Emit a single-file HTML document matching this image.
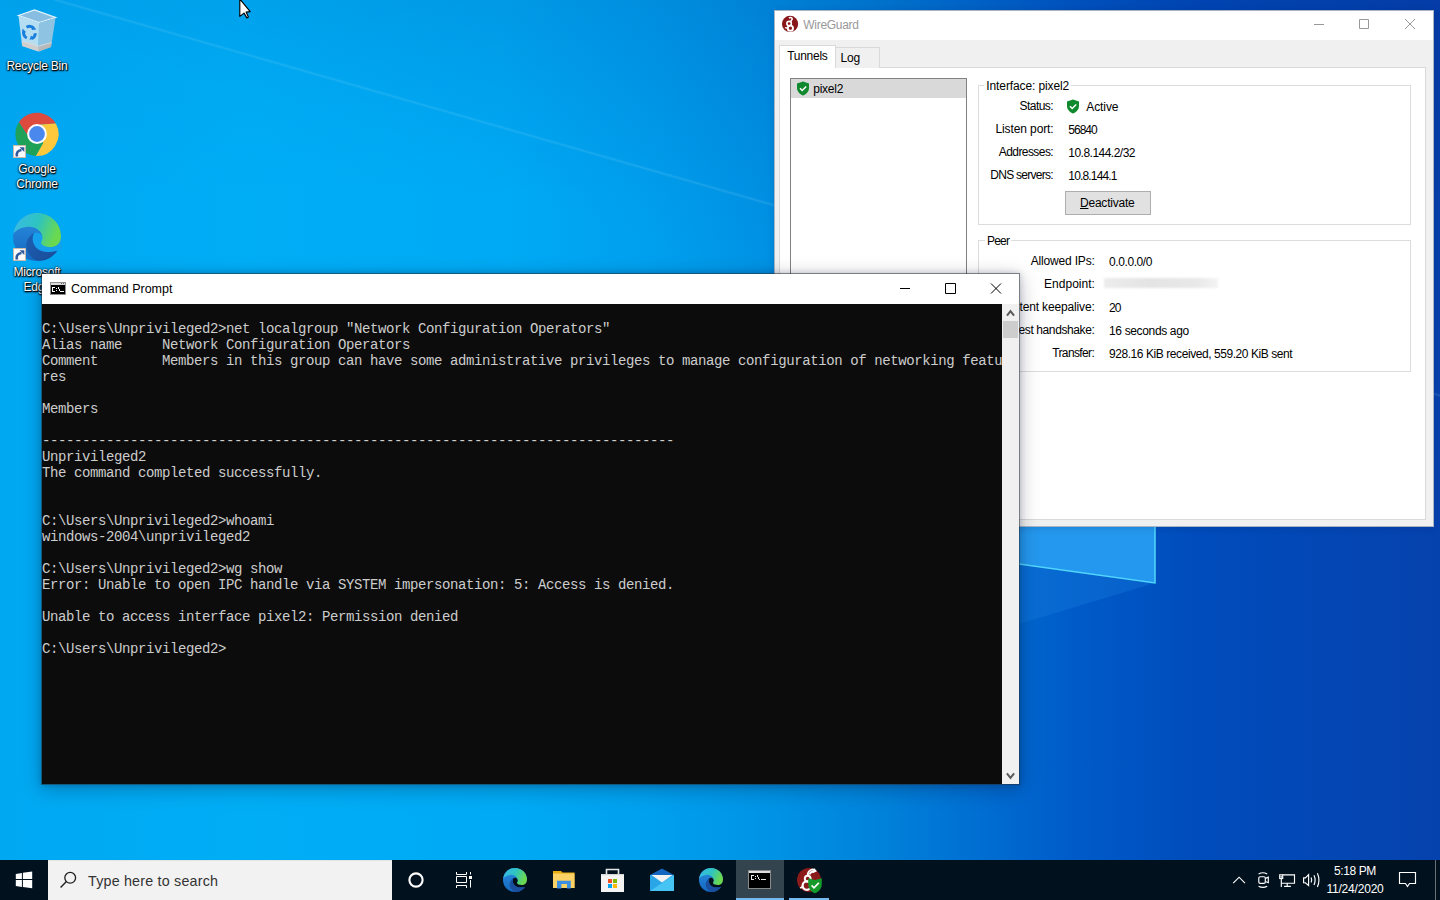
<!DOCTYPE html>
<html><head><meta charset="utf-8">
<style>
*{margin:0;padding:0;box-sizing:border-box}
html,body{width:1440px;height:900px;overflow:hidden}
body{position:relative;font-family:"Liberation Sans",sans-serif;background:#0a5fd0}
.a{position:absolute}
.txt{white-space:pre}
#con{left:42px;top:304px;width:960px;height:480px;background:#0c0c0c;color:#cccccc;font-family:"Liberation Mono",monospace;font-size:14px;letter-spacing:-0.4px;line-height:16px;white-space:pre;padding-top:17px}
.lbl{color:#fff;font-size:12px;letter-spacing:-0.2px;text-align:center;text-shadow:0 0 2px #000,0 1px 2px #000,1px 1px 1px #000}
</style></head><body>
<svg class="a" style="left:0;top:0" width="1440" height="900">
 <defs>
  <linearGradient id="wb" x1="0" y1="0" x2="1440" y2="0" gradientUnits="userSpaceOnUse">
   <stop offset="0" stop-color="#00a8f2"/><stop offset=".17" stop-color="#00aef6"/><stop offset=".35" stop-color="#00aaf4"/>
   <stop offset=".45" stop-color="#00a0ee"/><stop offset=".54" stop-color="#0092e4"/><stop offset=".61" stop-color="#0082da"/>
   <stop offset=".68" stop-color="#006ed2"/><stop offset=".75" stop-color="#005ac8"/><stop offset=".83" stop-color="#004cbc"/>
   <stop offset="1" stop-color="#0642ae"/>
  </linearGradient>
  <linearGradient id="wt" x1="330" y1="380" x2="560" y2="-250" gradientUnits="userSpaceOnUse">
   <stop offset="0" stop-color="#002a90" stop-opacity="0"/><stop offset=".35" stop-color="#002a90" stop-opacity="0"/><stop offset=".7" stop-color="#002a90" stop-opacity=".1"/><stop offset="1" stop-color="#002a90" stop-opacity=".2"/>
  </linearGradient>
  <linearGradient id="wv" x1="0" y1="0" x2="0" y2="900" gradientUnits="userSpaceOnUse">
   <stop offset="0" stop-color="#003090" stop-opacity=".06"/><stop offset=".22" stop-color="#003090" stop-opacity="0"/>
  </linearGradient>
 </defs>
 <rect width="1440" height="900" fill="url(#wb)"/>
 <rect width="1440" height="900" fill="url(#wv)"/>
 <rect width="1440" height="900" fill="url(#wt)"/>
 <path d="M54 -0.5L1440 395.5" stroke="#8fdcff" stroke-opacity=".07" stroke-width="3.5"/><path d="M54 -0.5L1440 395.5" stroke="#a8e6ff" stroke-opacity=".12" stroke-width="1"/>
 <path d="M1019 564L1155 583L1019 624Z" fill="#1a80e0" fill-opacity=".32"/>
 <path d="M1019 527H1155V583L1019 564Z" fill="#2498ee"/>
 <path d="M1155 527V583L1019 564" fill="none" stroke="#50d6fc" stroke-width="1.5"/>
</svg>

<!-- desktop icons -->
<svg class="a" style="left:0;top:0" width="80" height="300">
 <defs>
  <linearGradient id="egA" x1="0" y1="0" x2="1" y2="0.3"><stop offset="0" stop-color="#3ab8ec"/><stop offset=".55" stop-color="#2ec4c0"/><stop offset="1" stop-color="#6ad950"/></linearGradient>
  <linearGradient id="egB" x1="0" y1="0" x2="0" y2="1"><stop offset="0" stop-color="#2a8ee0"/><stop offset="1" stop-color="#1468c0"/></linearGradient>
  <linearGradient id="egC" x1="0" y1="0" x2="1" y2="1"><stop offset="0" stop-color="#1c5fb4"/><stop offset="1" stop-color="#1a4c98"/></linearGradient>
 </defs>
 <!-- recycle bin -->
 <path d="M18.5 15.5L34.5 10L55.5 17.5L39 22.5Z" fill="#86bde0" stroke="#e4f3fb" stroke-width="1.3"/>
 <path d="M18.5 16L39 23L38.6 51.5L22.2 46Z" fill="#b6def3"/>
 <path d="M39 23L55.5 18L51 47L38.6 51.5Z" fill="#8fc3e2"/>
 <path d="M21.6 41.5L38.8 47L38.6 51.5L22.2 46Z" fill="#cfcfcf"/>
 <path d="M38.8 47L51.6 42.8L51 47L38.6 51.5Z" fill="#b9b9b9"/>
 <path d="M22 41.5L38.8 46L51.5 42.5" fill="none" stroke="#d9d9d9" stroke-width="1"/>
 <g fill="none" stroke="#1a7fdc" stroke-width="3"><path d="M26.5 27.2A6 6 0 0 1 33.8 28.3"/><path d="M35.3 33.2A6 6 0 0 1 31.8 38.6"/><path d="M26.8 38A6 6 0 0 1 23.8 31.6"/></g><g fill="#1a7fdc"><path d="M32.5 25.5L36.5 29.5L31.5 30Z"/><path d="M34 38.5L29.5 40L31 35.5Z"/><path d="M22 33.5L22.5 28.5L26 32Z"/></g>
 <!-- chrome -->
 <path d="M37 134L26.7 134.3L18.9 122.2A22 22 0 0 1 55.9 123.6L40.9 124.5Z" fill="#dd4b3e"/>
 <path d="M37 134L40.9 124.5L55.9 123.6A22 22 0 0 1 35.7 156L43.2 142.7Z" fill="#fdc83c"/>
 <path d="M37 134L43.2 142.7L35.7 156A22 22 0 0 1 18.9 122.2L26.7 134.3Z" fill="#1fa257"/>
 <circle cx="37" cy="134" r="9.9" fill="#fff"/>
 <circle cx="37" cy="134" r="7.9" fill="#4a88ee"/>
 <!-- edge -->
 <g transform="translate(13 213)">
  <circle cx="24" cy="24" r="24" fill="url(#egB)"/>
  <path d="M20 21C23 18.5 28 19.5 29.5 23.5L48.5 24L48.5 36L44.5 37.8C40 39.5 32 40 27 37.5C21 34.5 17.5 27 20 21Z" fill="#14a0ec"/>
  <path d="M21 20C15 23 12.5 30 13.5 35C15 42 21 47.8 27 47.8C35 47.5 41 42.5 44.5 37.8C40 39.5 32 40 27 37.5C21 34.5 17.5 27 21 20Z" fill="url(#egC)"/>
  <path d="M0.3 21C2 9 12 0 24 0C37 0 48 10 48 23C48 29 45 33 40 33.8C35 34.5 29 33 28.2 30.5C27.6 28.5 30 27 29.5 24C28.8 18 22 13 14.5 13.8C7.5 14.5 2 18 0.3 21Z" fill="url(#egA)"/>
 </g>
 <!-- shortcut arrows -->
 <g>
  <rect x="13.5" y="145.5" width="12" height="12" fill="#fafafa" stroke="#c9b9aa"/>
  <path d="M17 156.5C16 153 17.5 150.5 21.5 150" fill="none" stroke="#2f5b9e" stroke-width="2.6"/><path d="M19.5 147.3H24.3V152.1Z" fill="#2f5b9e"/>
  <rect x="13.5" y="248.5" width="12" height="12" fill="#fafafa" stroke="#c9b9aa"/>
  <path d="M17 259.5C16 256 17.5 253.5 21.5 253" fill="none" stroke="#2f5b9e" stroke-width="2.6"/><path d="M19.5 250.3H24.3V255.1Z" fill="#2f5b9e"/>
 </g>
</svg>
<div class="a lbl" style="left:0;top:59px;width:74px;line-height:14px">Recycle Bin</div>
<div class="a lbl" style="left:0;top:162px;width:74px;line-height:15px">Google<br>Chrome</div>
<div class="a lbl" style="left:0;top:265px;width:74px;line-height:15px">Microsoft<br>Edge</div>
<!-- cursor -->
<svg class="a" style="left:236px;top:0" width="18" height="22"><path d="M3.8 -1L14.2 11.6L10.1 12.1L12.4 17L10.9 17.9L8 13.1L3.8 16.4Z" fill="#fff" stroke="#000" stroke-width="1.15" stroke-linejoin="round"/></svg>

<!-- WireGuard -->
<div class="a" style="left:774px;top:10px;width:660px;height:517px;box-shadow:0 1px 7px rgba(0,20,60,.16)"></div>
<div class="a" style="left:774px;top:10px;width:660px;height:517px;background:#f0f0f0;border:1px solid #a9b4c6"></div>
<div class="a" style="left:775px;top:11px;width:658px;height:29px;background:#fff"></div>
<svg class="a" style="left:781px;top:15px" width="18" height="18" viewBox="0 0 18 18"><circle cx="9.05" cy="8.95" r="8.1" fill="#88171a"/>
 <path d="M7.9 3.2Q9.6 1.9 10.9 3.1Q11.8 4.2 10.4 5.3Q9.4 6.1 10.1 7.2" fill="none" stroke="#fff" stroke-width="1.5"/>
 <circle cx="8.1" cy="8.6" r="2.25" fill="none" stroke="#fff" stroke-width="1.6"/>
 <circle cx="9.4" cy="13.2" r="2.6" fill="none" stroke="#fff" stroke-width="1.9"/>
 <path d="M4 12.6L6.9 13.3" stroke="#fff" stroke-width="1.4"/></svg>
<svg class="a" style="left:1300px;top:11px" width="133" height="28"><path d="M14 13.5h10M59.5 8.5h9v9h-9zM105 8l10 10M115 8l-10 10" stroke="#999" stroke-width="1" fill="none"/></svg>
<!-- tabs -->
<div class="a" style="left:779px;top:67px;width:647px;height:453px;background:#fff;border:1px solid #d9d9d9"></div>
<div class="a" style="left:835px;top:47px;width:45px;height:21px;background:#f0f0f0;border:1px solid #d9d9d9;border-bottom:none"></div>
<div class="a" style="left:779px;top:45px;width:57px;height:23px;background:#fff;border:1px solid #d9d9d9;border-bottom:none"></div>
<!-- list -->
<div class="a" style="left:790px;top:78px;width:177px;height:220px;background:#fff;border:1px solid #828282"></div>
<div class="a" style="left:791px;top:79px;width:175px;height:19px;background:#d9d9d9"></div>
<svg class="a" style="left:796px;top:81px" width="14" height="15" viewBox="0 0 14 15"><path d="M7 .6L13 2.5v4.6c0 3.6-2.6 6.2-6 7.4-3.4-1.2-6-3.8-6-7.4V2.5z" fill="#10892e"/><path d="M4 7.3l2.2 2.2 4-4.1" stroke="#fff" stroke-width="1.5" fill="none"/></svg>
<!-- interface group -->
<div class="a" style="left:978px;top:85px;width:433px;height:140px;border:1px solid #dcdcdc"></div>
<svg class="a" style="left:1066px;top:99px" width="14" height="15" viewBox="0 0 14 15"><path d="M7 .6L13 2.5v4.6c0 3.6-2.6 6.2-6 7.4-3.4-1.2-6-3.8-6-7.4V2.5z" fill="#10892e"/><path d="M4 7.3l2.2 2.2 4-4.1" stroke="#fff" stroke-width="1.5" fill="none"/></svg>
<div class="a" style="left:1065px;top:191px;width:86px;height:24px;background:#e1e1e1;border:1px solid #adadad"></div>
<!-- peer group -->
<div class="a" style="left:978px;top:240px;width:433px;height:132px;border:1px solid #dcdcdc"></div>
<div class="a" style="left:1104px;top:278px;width:114px;height:10px;background:linear-gradient(90deg,#ececec,#e4e4e4 40%,#e8e8e8 80%,#f4f4f4);filter:blur(1px)"></div>
<div class="a txt" style="left:986.30px;top:79px;font-size:12px;line-height:14px;letter-spacing:-0.109px;background:#fff;padding-right:2px;box-shadow:-2px 0 0 #fff">Interface: pixel2</div>
<div class="a txt" style="left:1019.50px;top:99px;font-size:12px;line-height:14px;letter-spacing:-0.537px;">Status:</div>
<div class="a txt" style="left:995.50px;top:122px;font-size:12px;line-height:14px;letter-spacing:-0.112px;">Listen port:</div>
<div class="a txt" style="left:998.80px;top:145px;font-size:12px;line-height:14px;letter-spacing:-0.577px;">Addresses:</div>
<div class="a txt" style="left:990.30px;top:168px;font-size:12px;line-height:14px;letter-spacing:-0.728px;">DNS servers:</div>
<div class="a txt" style="left:1086.30px;top:100px;font-size:12px;line-height:14px;letter-spacing:-0.101px;">Active</div>
<div class="a txt" style="left:1068.30px;top:123px;font-size:12px;line-height:14px;letter-spacing:-0.999px;">56840</div>
<div class="a txt" style="left:1068.30px;top:146px;font-size:12px;line-height:14px;letter-spacing:-0.519px;">10.8.144.2/32</div>
<div class="a txt" style="left:1068.30px;top:169px;font-size:12px;line-height:14px;letter-spacing:-0.838px;">10.8.144.1</div>
<div class="a txt" style="left:1080.00px;top:196px;font-size:12px;line-height:14px;letter-spacing:-0.225px;"><u>D</u>eactivate</div>
<div class="a txt" style="left:987.00px;top:234px;font-size:12px;line-height:14px;letter-spacing:-0.784px;background:#fff;padding-right:2px;box-shadow:-2px 0 0 #fff">Peer</div>
<div class="a txt" style="left:1030.80px;top:254px;font-size:12px;line-height:14px;letter-spacing:-0.181px;">Allowed IPs:</div>
<div class="a txt" style="left:1044.10px;top:277px;font-size:12px;line-height:14px;letter-spacing:0.003px;">Endpoint:</div>
<div class="a txt" style="left:987.00px;top:300px;font-size:12px;line-height:14px;letter-spacing:-0.145px;">Persistent keepalive:</div>
<div class="a txt" style="left:1003.00px;top:323px;font-size:12px;line-height:14px;letter-spacing:-0.390px;">Latest handshake:</div>
<div class="a txt" style="left:1052.20px;top:346px;font-size:12px;line-height:14px;letter-spacing:-0.617px;">Transfer:</div>
<div class="a txt" style="left:1109.00px;top:255px;font-size:12px;line-height:14px;letter-spacing:-0.404px;">0.0.0.0/0</div>
<div class="a txt" style="left:1109.00px;top:301px;font-size:12px;line-height:14px;letter-spacing:-1.000px;">20</div>
<div class="a txt" style="left:1109.00px;top:324px;font-size:12px;line-height:14px;letter-spacing:-0.351px;">16 seconds ago</div>
<div class="a txt" style="left:1109.00px;top:347px;font-size:12px;line-height:14px;letter-spacing:-0.433px;">928.16 KiB received, 559.20 KiB sent</div>
<div class="a txt" style="left:787.20px;top:49px;font-size:12px;line-height:14px;letter-spacing:-0.274px;">Tunnels</div>
<div class="a txt" style="left:840.50px;top:51px;font-size:12px;line-height:14px;letter-spacing:-0.224px;">Log</div>
<div class="a txt" style="left:813.30px;top:82px;font-size:12px;line-height:14px;letter-spacing:-0.256px;">pixel2</div>
<div class="a txt" style="left:803.30px;top:18px;font-size:12px;line-height:14px;letter-spacing:-0.292px;color:#999">WireGuard</div>

<!-- CMD -->
<div class="a" style="left:41px;top:273px;width:979px;height:512px;box-shadow:0 4px 18px rgba(0,10,40,.28), 0 0 6px rgba(0,10,40,.18)"></div>
<div class="a" style="left:41px;top:273px;width:979px;height:512px;background:#0c0c0c;background-clip:padding-box;border:1px solid rgba(30,40,50,.6)"></div>
<div class="a" style="left:42px;top:274px;width:977px;height:30px;background:#fff"></div>
<svg class="a" style="left:50px;top:282px" width="16" height="13" viewBox="0 0 16 13" shape-rendering="crispEdges"><rect x="0" y="0" width="16" height="13" fill="#8e8e8e"/><rect x="1" y="1" width="14" height="2" fill="#d8d8d8"/><rect x="11" y="1" width="1" height="1" fill="#6a6a6a"/><rect x="13" y="1" width="1" height="1" fill="#6a6a6a"/><rect x="1" y="3" width="14" height="9" fill="#000"/><g fill="#fff"><rect x="2" y="5" width="3" height="1"/><rect x="2" y="6" width="1" height="3"/><rect x="2" y="9" width="3" height="1"/><rect x="6" y="6" width="1" height="1"/><rect x="6" y="8" width="1" height="1"/><rect x="8" y="5" width="1" height="2"/><rect x="9" y="7" width="1" height="2"/><rect x="10" y="9" width="1" height="1"/><rect x="11" y="9" width="3" height="1"/></g></svg>
<div class="a txt" style="left:71px;top:282px;font-size:12.5px;color:#000">Command Prompt</div>
<svg class="a" style="left:880px;top:275px" width="139" height="29"><path d="M20 13.5h10M65.5 8.5h10v10h-10zM111 8.5l10 10M121 8.5l-10 10" stroke="#000" stroke-width="1" fill="none"/></svg>
<div id="con" class="a">C:\Users\Unprivileged2>net localgroup "Network Configuration Operators"
Alias name     Network Configuration Operators
Comment        Members in this group can have some administrative privileges to manage configuration of networking featu
res

Members

-------------------------------------------------------------------------------
Unprivileged2
The command completed successfully.


C:\Users\Unprivileged2>whoami
windows-2004\unprivileged2

C:\Users\Unprivileged2>wg show
Error: Unable to open IPC handle via SYSTEM impersonation: 5: Access is denied.

Unable to access interface pixel2: Permission denied

C:\Users\Unprivileged2></div>
<div class="a" style="left:1002px;top:304px;width:17px;height:480px;background:#f0f0f0"></div>
<div class="a" style="left:1003px;top:321px;width:15px;height:17px;background:#cdcdcd"></div>
<svg class="a" style="left:1002px;top:304px" width="17" height="480"><path d="M5 11.6L8.5 7.2L12 11.6M4.9 469.4L8.5 473.9L12.1 469.4" stroke="#5a5a5a" stroke-width="2" fill="none"/></svg>

<!-- taskbar -->
<div class="a" style="left:0;top:860px;width:1440px;height:40px;background:#02111e"></div>
<svg class="a" style="left:0;top:860px" width="48" height="40"><path d="M15.8 14L21.9 12.9V19H15.8ZM22.9 12.8L32.2 11.5V19H22.9ZM15.8 20H21.9V27L15.8 25.9ZM22.9 20H32.2V28.2L22.9 27.1Z" fill="#fff"/></svg>
<div class="a" style="left:48px;top:860px;width:344px;height:40px;background:#f2f2f2;border-top:1px solid #e4e4e4"></div>
<svg class="a" style="left:48px;top:860px" width="40" height="40"><circle cx="22.2" cy="17.8" r="5.4" fill="none" stroke="#1f1f1f" stroke-width="1.3"/><path d="M18.4 21.6L12.6 27.4" stroke="#1f1f1f" stroke-width="1.4"/></svg>
<div class="a txt" style="left:88px;top:873px;font-size:14.3px;letter-spacing:0.2px;color:#333">Type here to search</div>
<svg class="a" style="left:392px;top:860px" width="100" height="40"><circle cx="24" cy="20" r="6.6" fill="none" stroke="#fff" stroke-width="2.1"/>
 <g stroke="#fff" stroke-width="1" fill="none"><path d="M64.5 12V14.5H74.5V12M64.5 28V25.5H74.5V28M64.5 16.5h10v6h-10z"/><path d="M78.5 12v2.5M78.5 20v7.5"/></g><rect x="77" y="16" width="3" height="3" fill="#fff"/></svg>
<svg class="a" style="left:491px;top:856px" width="48" height="48"><g transform="translate(12 12) scale(0.5)">
  <circle cx="24" cy="24" r="24" fill="url(#egB2)"/>
  <path d="M20 21C23 18.5 28 19.5 29.5 23.5L48.5 24L48.5 36L44.5 37.8C40 39.5 32 40 27 37.5C21 34.5 17.5 27 20 21Z" fill="#02111e"/>
  <path d="M21 20C15 23 12.5 30 13.5 35C15 42 21 47.8 27 47.8C35 47.5 41 42.5 44.5 37.8C40 39.5 32 40 27 37.5C21 34.5 17.5 27 21 20Z" fill="#1a4fa0"/>
  <path d="M0.3 21C2 9 12 0 24 0C37 0 48 10 48 23C48 29 45 33 40 33.8C35 34.5 29 33 28.2 30.5C27.6 28.5 30 27 29.5 24C28.8 18 22 13 14.5 13.8C7.5 14.5 2 18 0.3 21Z" fill="url(#egA2)"/>
</g>
<defs><linearGradient id="egA2" x1="0" y1="0" x2="1" y2="0.3"><stop offset="0" stop-color="#3ab8ec"/><stop offset=".55" stop-color="#2ec4c0"/><stop offset="1" stop-color="#6ad950"/></linearGradient>
<linearGradient id="egB2" x1="0" y1="0" x2="0" y2="1"><stop offset="0" stop-color="#2a8ee0"/><stop offset="1" stop-color="#1468c0"/></linearGradient></defs></svg>
<svg class="a" style="left:687px;top:856px" width="48" height="48"><g transform="translate(12 12) scale(0.5)">
  <circle cx="24" cy="24" r="24" fill="url(#egB2)"/>
  <path d="M20 21C23 18.5 28 19.5 29.5 23.5L48.5 24L48.5 36L44.5 37.8C40 39.5 32 40 27 37.5C21 34.5 17.5 27 20 21Z" fill="#02111e"/>
  <path d="M21 20C15 23 12.5 30 13.5 35C15 42 21 47.8 27 47.8C35 47.5 41 42.5 44.5 37.8C40 39.5 32 40 27 37.5C21 34.5 17.5 27 21 20Z" fill="#1a4fa0"/>
  <path d="M0.3 21C2 9 12 0 24 0C37 0 48 10 48 23C48 29 45 33 40 33.8C35 34.5 29 33 28.2 30.5C27.6 28.5 30 27 29.5 24C28.8 18 22 13 14.5 13.8C7.5 14.5 2 18 0.3 21Z" fill="url(#egA2)"/>
</g></svg>
<!-- explorer -->
<svg class="a" style="left:540px;top:860px" width="48" height="40">
 <path d="M13 11H21L22.5 12.5H34.5V28H13Z" fill="#e8ac10"/>
 <rect x="13" y="13.5" width="21.5" height="14.5" fill="#fbd266"/>
 <path d="M17 28.5V20.7H30.8V28.5H27V24H21.4V28.5Z" fill="#3d8fe0"/>
</svg>
<!-- store -->
<svg class="a" style="left:589px;top:860px" width="48" height="40">
 <path d="M17.5 14.5V9.5H29.5V14.5" fill="none" stroke="#e6e6e6" stroke-width="1.6"/>
 <path d="M12 14H35V32H12Z" fill="#f4f4f4"/>
 <rect x="12" y="14" width="23" height="1.2" fill="#d8d8d8"/>
 <rect x="19" y="19" width="4" height="4" fill="#f05022"/><rect x="24" y="19" width="4" height="4" fill="#7fba00"/>
 <rect x="19" y="24" width="4" height="4" fill="#00a4ef"/><rect x="24" y="24" width="4" height="4" fill="#ffb900"/>
</svg>
<!-- mail -->
<svg class="a" style="left:638px;top:860px" width="48" height="40">
 <path d="M12 15L24 8.5L36 15Z" fill="#1466c0"/>
 <path d="M12 15H36V31H12Z" fill="#2aa6e8"/>
 <path d="M36 15V31H12Z" fill="#46c4f4"/>
 <path d="M13.5 15H34.5L24 22.5Z" fill="#f2f2f2"/>
</svg>
<!-- cmd active -->
<div class="a" style="left:736px;top:860px;width:48px;height:40px;background:#34444f"></div>
<div class="a" style="left:736px;top:898px;width:48px;height:2px;background:#76b9ed"></div>
<svg class="a" style="left:748px;top:870px" width="23" height="20" shape-rendering="crispEdges">
 <rect x="0" y="0" width="22.5" height="19" fill="#8a8a8a"/><rect x="1" y="1" width="20.5" height="1.5" fill="#e0e0e0"/><rect x="1" y="2.5" width="20.5" height="15.5" fill="#000"/>
 <g fill="#e8e8e8"><rect x="3" y="5" width="3" height="1"/><rect x="3" y="6" width="1" height="3"/><rect x="3" y="9" width="3" height="1"/><rect x="7" y="6" width="1" height="1"/><rect x="7" y="8" width="1" height="1"/><rect x="9" y="5" width="1" height="2"/><rect x="10" y="7" width="1" height="2"/><rect x="11" y="9" width="1" height="1"/><rect x="13" y="9" width="5" height="1"/></g>
</svg>
<!-- wireguard taskbar -->
<svg class="a" style="left:796px;top:867px" width="30" height="28">
 <circle cx="13" cy="13" r="12" fill="#8b1a1a"/>
 <path d="M11.8 8.2C11.6 5.8 13.2 3.2 15.8 2.6C17.2 2.3 18.6 2.8 19.4 3.8L17.2 4.9C15.6 4.6 14 5.6 13.8 7.4" fill="none" stroke="#fff" stroke-width="2"/>
 <path d="M16.5 2.5l2.5-1.2.3 2" fill="#fff"/>
 <circle cx="11.7" cy="11.6" r="2.9" fill="none" stroke="#fff" stroke-width="2"/>
 <circle cx="10.8" cy="18.6" r="4.2" fill="none" stroke="#fff" stroke-width="2.2"/>
 <path d="M6.8 19.5L4.2 21.2" stroke="#fff" stroke-width="1.6"/>
 <path d="M19 13L25.8 11.2V17.2c0 4.3-2.9 7.6-6.8 9-3.9-1.4-6.8-4.7-6.8-9V11.2Z" fill="#139a2a"/>
 <path d="M15.6 18.4l2.4 2.5 4.8-5" fill="none" stroke="#fff" stroke-width="1.6"/>
</svg>
<div class="a" style="left:789px;top:898px;width:40px;height:2px;background:#76b9ed"></div>
<!-- tray -->
<svg class="a" style="left:1220px;top:860px" width="220" height="40">
 <g fill="none" stroke="#fff" stroke-width="1.15">
  <path d="M13.2 23.2L19.1 17.2L25 23.2"/>
  <path d="M38.6 13.9Q42.9 11.6 47.2 13.9M38.6 26.3Q42.9 28.6 47.2 26.3"/>
  <rect x="38.8" y="16.7" width="6.5" height="6.6" rx="1.4"/>
  <path d="M45.4 18.4L48.3 17.2V22.7L45.4 21.5"/>
  <rect x="59.7" y="14.8" width="3" height="3.7"/>
  <path d="M62.7 14.8H74.5V23.2H61.3M61.3 18.5V26.9M67.2 23.2V26.3M64.1 26.3H70.9M60.6 16.3l.6.7.6-.7" />
  <path d="M83.6 17.8H85.4L88.6 14.6V25.4L85.4 22.7H83.6Z"/>
  <path d="M91.1 17.6Q92.3 20.1 91.1 22.6M94 15.3Q96.2 20.1 94 24.9M97.4 13.2Q100.5 20.1 97.4 27"/>
  <path d="M179.5 12.5h16v11h-6l-2 3-2-3h-6z"/>
 </g>
</svg>
<div class="a" style="left:1315px;top:863px;width:80px;text-align:center;font-size:12px;line-height:17px;letter-spacing:-0.4px;color:#fff">5:18 PM</div>
<div class="a" style="left:1315px;top:881px;width:80px;text-align:center;font-size:12px;line-height:17px;letter-spacing:-0.2px;color:#fff">11/24/2020</div>
<div class="a" style="left:1435px;top:860px;width:1px;height:40px;background:#6a7077"></div>
</body></html>
